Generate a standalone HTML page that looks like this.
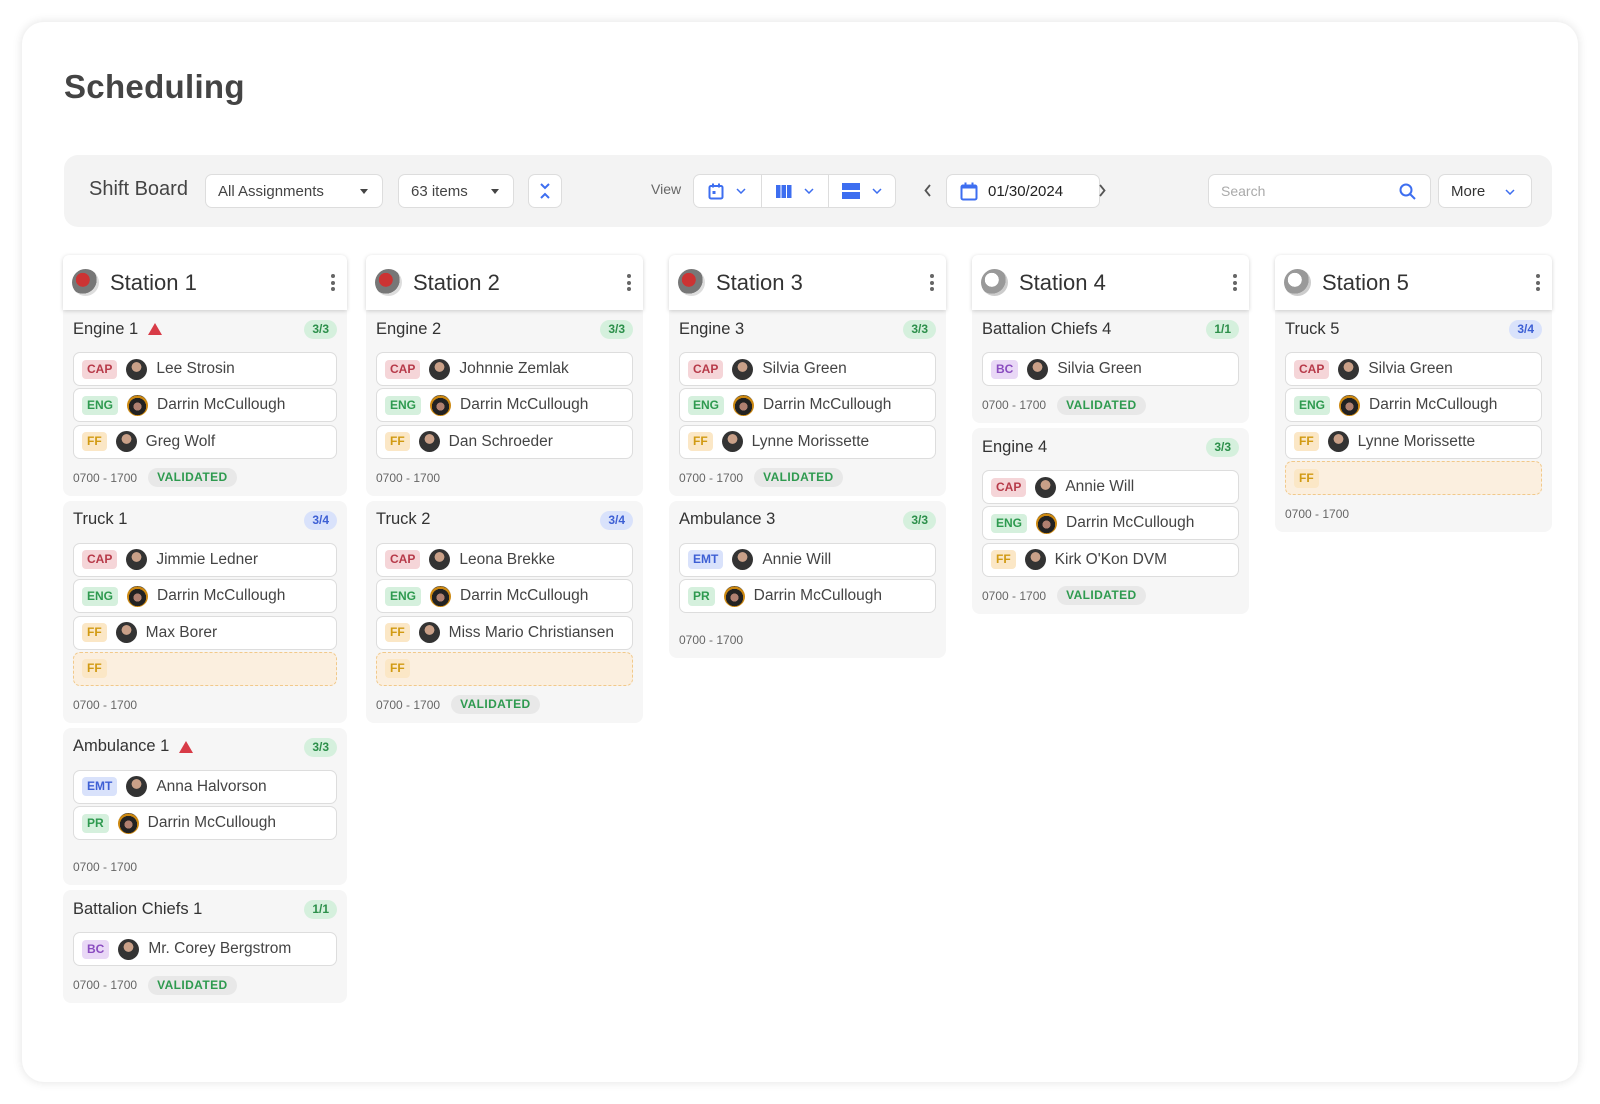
<!DOCTYPE html>
<html><head><meta charset="utf-8"><style>
*{box-sizing:border-box;margin:0;padding:0}
body{width:1600px;height:1104px;background:#fff;font-family:"Liberation Sans",sans-serif;color:#333;position:relative;overflow:hidden}
.outer{position:absolute;left:22px;top:22px;width:1556px;height:1060px;background:#fff;border-radius:22px;box-shadow:0 0 10px rgba(0,0,0,.12)}
h1{position:absolute;left:64px;top:68px;font-size:33px;font-weight:bold;color:#444;letter-spacing:.3px}
.tb{position:absolute;left:64px;top:155px;width:1488px;height:72px;background:#f3f3f3;border-radius:14px}
.tb>*{position:absolute}
.btn{background:#fff;border:1px solid #ddd;border-radius:7px;height:34px;top:19px;font-size:15px;color:#444;display:flex;align-items:center;padding:0 12px}
.caret{position:absolute;right:14px;top:14px;width:0;height:0;border-left:4px solid transparent;border-right:4px solid transparent;border-top:5px solid #444}
.col{position:absolute;top:255px;width:277px}
.sh{height:55px;background:#fff;border-radius:6px 6px 0 0;box-shadow:0 1px 4px rgba(0,0,0,.18);display:flex;align-items:center;padding-left:9px;font-size:22px;color:#333;position:relative;z-index:2}
.ic{width:27px;height:27px;border-radius:50%;margin-right:11px;background:radial-gradient(circle at 40% 40%,#c33 0 30%,#777 31% 60%,#ddd 61%)}
.dots{position:absolute;right:12px;top:19px;width:4px}
.dots i{display:block;width:4px;height:4px;background:#666;border-radius:50%;margin-bottom:2.5px}
.g{background:#f6f6f6;border-radius:0 0 8px 8px;padding:4px 10px 3px;margin-bottom:5px}
.g+.g{border-radius:8px}
.gt{height:30px;display:flex;align-items:center;font-size:16.5px;color:#333;position:relative}
.cnt{position:absolute;right:0;top:6px;height:19px;padding:0 8px;border-radius:10px;font-size:12px;font-weight:bold;line-height:19px}
.gr{background:#d5f0dd;color:#2c8f4a}.bl{background:#d9e2fb;color:#3d5fd4}
.warn{margin-left:10px;width:0;height:0;border-left:7px solid transparent;border-right:7px solid transparent;border-bottom:12px solid #d83b47}
.rows{margin-top:8px}
.r{height:34px;background:#fff;border:1px solid #ddd;border-radius:7px;margin-bottom:2.4px;display:flex;align-items:center;padding-left:8px;font-size:15.5px;color:#444}
.r.e{background:#fbefdf;border:1px dashed #f1c98b}
.b{height:19px;padding:0 5px;border-radius:4px;font-size:12px;font-weight:bold;line-height:19px;margin-right:9px}
.CAP{background:#f5d5d8;color:#b73a49}.ENG{background:#d5f0dd;color:#2e9a4f}.FF{background:#fbe7c6;color:#d19a12}.EMT{background:#d9e2fb;color:#3d5fd4}.PR{background:#d5f0dd;color:#2e9a4f}.BC{background:#e9d8f6;color:#8a4cc0}
.av{width:21px;height:21px;border-radius:50%;margin-right:9px;background:radial-gradient(circle at 50% 38%,#c9a088 0 28%,#333 30%)}
.av.f{background:radial-gradient(circle at 50% 55%,#b08070 0 25%,#222 27% 55%,#c81 56% 70%,#222 71%)}
.ft{height:30px;margin-top:4px;display:flex;align-items:center;font-size:12px;color:#666}
.ft.x{height:38px;padding-top:8px}
.v{margin-left:11px;background:#e8e8e8;color:#2e9a4f;font-weight:bold;font-size:12px;height:19px;line-height:19px;padding:0 9px;border-radius:10px;letter-spacing:.4px}
</style></head><body>
<div class="outer"></div>
<h1>Scheduling</h1>
<div class="tb">
<div style="left:25px;top:23px;font-size:20px;color:#444">Shift Board</div>
<div class="btn" style="left:141px;width:178px">All Assignments<span class="caret"></span></div>
<div class="btn" style="left:334px;width:116px">63 items<span class="caret"></span></div>
<div class="btn" style="left:464px;width:34px;padding:0;justify-content:center"><svg width="14" height="18" viewBox="0 0 14 18"><path d="M3 2l4 4 4-4M3 16l4-4 4 4" stroke="#3d6ef0" stroke-width="2" fill="none"/></svg></div>
<div style="left:587px;top:26px;font-size:14px;color:#666">View</div>
<div class="btn" style="left:629px;width:203px;padding:0">
<div style="width:68px;height:100%;border-right:1px solid #ddd;display:flex;align-items:center;justify-content:center;gap:12px"><svg width="16" height="17"><rect x="1.5" y="3" width="13" height="12.5" rx="1.5" stroke="#3d6ef0" stroke-width="2" fill="none"/><rect x="4" y="0.5" width="2" height="4" fill="#3d6ef0"/><rect x="10" y="0.5" width="2" height="4" fill="#3d6ef0"/><rect x="4.5" y="8" width="3" height="3" fill="#3d6ef0"/></svg><svg width="10" height="6"><path d="M1 1l4 4 4-4" stroke="#3d6ef0" stroke-width="1.5" fill="none"/></svg></div>
<div style="width:68px;height:100%;border-right:1px solid #ddd;display:flex;align-items:center;justify-content:center;gap:12px"><svg width="16" height="13"><rect x="0" y="0" width="4.5" height="13" fill="#3d6ef0"/><rect x="5.5" y="0" width="4.5" height="13" fill="#3d6ef0"/><rect x="11" y="0" width="4.5" height="13" fill="#3d6ef0"/></svg><svg width="10" height="6"><path d="M1 1l4 4 4-4" stroke="#3d6ef0" stroke-width="1.5" fill="none"/></svg></div>
<div style="width:66px;height:100%;display:flex;align-items:center;justify-content:center;gap:12px"><svg width="18" height="16"><rect x="0" y="0" width="18" height="7" fill="#3d6ef0"/><rect x="0" y="9" width="18" height="7" fill="#3d6ef0"/></svg><svg width="10" height="6"><path d="M1 1l4 4 4-4" stroke="#3d6ef0" stroke-width="1.5" fill="none"/></svg></div>
</div>
<svg style="left:860px;top:29px" width="8" height="13"><path d="M6 1L1.5 6.5 6 12" stroke="#555" stroke-width="1.8" fill="none"/></svg>
<div class="btn" style="left:882px;width:154px;padding-left:13px"><svg width="18" height="19" style="margin-right:10px"><rect x="1.5" y="3.5" width="15" height="14" rx="1.5" stroke="#3d6ef0" stroke-width="2" fill="none"/><rect x="1.5" y="3.5" width="15" height="3" fill="#3d6ef0"/><rect x="4.5" y="0.5" width="2" height="4" fill="#3d6ef0"/><rect x="11.5" y="0.5" width="2" height="4" fill="#3d6ef0"/></svg><span style="color:#222">01/30/2024</span></div>
<svg style="left:1034px;top:29px" width="8" height="13"><path d="M2 1l4.5 5.5L2 12" stroke="#555" stroke-width="1.8" fill="none"/></svg>
<div class="btn" style="left:1144px;width:223px;color:#aaa;font-size:14px">Search<svg style="position:absolute;right:14px;top:8px" width="17" height="17"><circle cx="7" cy="7" r="5.5" stroke="#3d6ef0" stroke-width="2" fill="none"/><path d="M11 11l5 5" stroke="#3d6ef0" stroke-width="2"/></svg></div>
<div class="btn" style="left:1374px;width:94px;color:#333">More<svg style="position:absolute;right:16px;top:14px" width="10" height="6"><path d="M1 1l4 4 4-4" stroke="#3d6ef0" stroke-width="1.5" fill="none"/></svg></div>
</div>

<div class="col" style="left:63px;width:284px">
<div class="sh"><div class="ic"></div>Station 1<div class="dots"><i></i><i></i><i></i></div></div>
<div class="g"><div class="gt">Engine 1<span class="warn"></span><span class="cnt gr">3/3</span></div><div class="rows">
<div class="r"><span class="b CAP">CAP</span><span class="av"></span>Lee Strosin</div>
<div class="r"><span class="b ENG">ENG</span><span class="av f"></span>Darrin McCullough</div>
<div class="r"><span class="b FF">FF</span><span class="av"></span>Greg Wolf</div></div>
<div class="ft">0700 - 1700<span class="v">VALIDATED</span></div></div>
<div class="g"><div class="gt">Truck 1<span class="cnt bl">3/4</span></div><div class="rows">
<div class="r"><span class="b CAP">CAP</span><span class="av"></span>Jimmie Ledner</div>
<div class="r"><span class="b ENG">ENG</span><span class="av f"></span>Darrin McCullough</div>
<div class="r"><span class="b FF">FF</span><span class="av"></span>Max Borer</div>
<div class="r e"><span class="b FF">FF</span></div></div>
<div class="ft">0700 - 1700</div></div>
<div class="g"><div class="gt">Ambulance 1<span class="warn"></span><span class="cnt gr">3/3</span></div><div class="rows">
<div class="r"><span class="b EMT">EMT</span><span class="av"></span>Anna Halvorson</div>
<div class="r"><span class="b PR">PR</span><span class="av f"></span>Darrin McCullough</div></div>
<div class="ft x">0700 - 1700</div></div>
<div class="g"><div class="gt">Battalion Chiefs 1<span class="cnt gr">1/1</span></div><div class="rows">
<div class="r"><span class="b BC">BC</span><span class="av"></span>Mr. Corey Bergstrom</div></div>
<div class="ft">0700 - 1700<span class="v">VALIDATED</span></div></div>
</div>

<div class="col" style="left:366px">
<div class="sh"><div class="ic"></div>Station 2<div class="dots"><i></i><i></i><i></i></div></div>
<div class="g"><div class="gt">Engine 2<span class="cnt gr">3/3</span></div><div class="rows">
<div class="r"><span class="b CAP">CAP</span><span class="av"></span>Johnnie Zemlak</div>
<div class="r"><span class="b ENG">ENG</span><span class="av f"></span>Darrin McCullough</div>
<div class="r"><span class="b FF">FF</span><span class="av"></span>Dan Schroeder</div></div>
<div class="ft">0700 - 1700</div></div>
<div class="g"><div class="gt">Truck 2<span class="cnt bl">3/4</span></div><div class="rows">
<div class="r"><span class="b CAP">CAP</span><span class="av"></span>Leona Brekke</div>
<div class="r"><span class="b ENG">ENG</span><span class="av f"></span>Darrin McCullough</div>
<div class="r"><span class="b FF">FF</span><span class="av"></span>Miss Mario Christiansen</div>
<div class="r e"><span class="b FF">FF</span></div></div>
<div class="ft">0700 - 1700<span class="v">VALIDATED</span></div></div>
</div>

<div class="col" style="left:669px">
<div class="sh"><div class="ic"></div>Station 3<div class="dots"><i></i><i></i><i></i></div></div>
<div class="g"><div class="gt">Engine 3<span class="cnt gr">3/3</span></div><div class="rows">
<div class="r"><span class="b CAP">CAP</span><span class="av"></span>Silvia Green</div>
<div class="r"><span class="b ENG">ENG</span><span class="av f"></span>Darrin McCullough</div>
<div class="r"><span class="b FF">FF</span><span class="av"></span>Lynne Morissette</div></div>
<div class="ft">0700 - 1700<span class="v">VALIDATED</span></div></div>
<div class="g"><div class="gt">Ambulance 3<span class="cnt gr">3/3</span></div><div class="rows">
<div class="r"><span class="b EMT">EMT</span><span class="av"></span>Annie Will</div>
<div class="r"><span class="b PR">PR</span><span class="av f"></span>Darrin McCullough</div></div>
<div class="ft x">0700 - 1700</div></div>
</div>

<div class="col" style="left:972px">
<div class="sh"><div class="ic" style="background:radial-gradient(circle at 40% 40%,#fff 0 30%,#999 31% 60%,#ccc 61%)"></div>Station 4<div class="dots"><i></i><i></i><i></i></div></div>
<div class="g"><div class="gt">Battalion Chiefs 4<span class="cnt gr">1/1</span></div><div class="rows">
<div class="r"><span class="b BC">BC</span><span class="av"></span>Silvia Green</div></div>
<div class="ft">0700 - 1700<span class="v">VALIDATED</span></div></div>
<div class="g"><div class="gt">Engine 4<span class="cnt gr">3/3</span></div><div class="rows">
<div class="r"><span class="b CAP">CAP</span><span class="av"></span>Annie Will</div>
<div class="r"><span class="b ENG">ENG</span><span class="av f"></span>Darrin McCullough</div>
<div class="r"><span class="b FF">FF</span><span class="av"></span>Kirk O'Kon DVM</div></div>
<div class="ft">0700 - 1700<span class="v">VALIDATED</span></div></div>
</div>

<div class="col" style="left:1275px">
<div class="sh"><div class="ic" style="background:radial-gradient(circle at 40% 40%,#fff 0 30%,#999 31% 60%,#ccc 61%)"></div>Station 5<div class="dots"><i></i><i></i><i></i></div></div>
<div class="g"><div class="gt">Truck 5<span class="cnt bl">3/4</span></div><div class="rows">
<div class="r"><span class="b CAP">CAP</span><span class="av"></span>Silvia Green</div>
<div class="r"><span class="b ENG">ENG</span><span class="av f"></span>Darrin McCullough</div>
<div class="r"><span class="b FF">FF</span><span class="av"></span>Lynne Morissette</div>
<div class="r e"><span class="b FF">FF</span></div></div>
<div class="ft">0700 - 1700</div></div>
</div>
</body></html>
